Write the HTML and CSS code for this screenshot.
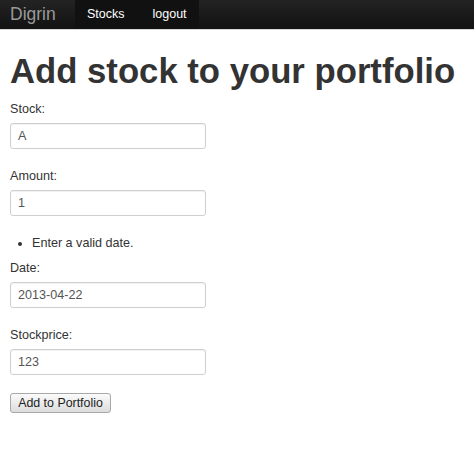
FILE: index.html
```html
<!DOCTYPE html>
<html>
<head>
<meta charset="utf-8">
<link rel="stylesheet" href="styles.css">
</head>
<body>
<div class="navbar">
  <a class="brand" href="#">Digrin</a>
  <ul class="nav">
    <li><a href="#">Stocks</a></li>
    <li class="logout"><a href="#">logout</a></li>
  </ul>
</div>
<div class="container">
  <h1>Add stock to your portfolio</h1>
  <form>
    <p class="field"><label>Stock:</label><input type="text" value="A"></p>
    <p class="field"><label>Amount:</label><input type="text" value="1"></p>
    <ul class="errorlist"><li>Enter a valid date.</li></ul>
    <p class="field"><label>Date:</label><input type="text" value="2013-04-22"></p>
    <p class="field"><label>Stockprice:</label><input type="text" value="123"></p>
    <button type="button" class="submit">Add to Portfolio</button>
  </form>
</div>
</body>
</html>
```
FILE: styles.css
```css
html, body {
  margin: 0;
  padding: 0;
  background: #fff;
}
body {
  font-family: "Liberation Sans", Arial, sans-serif;
  color: #333;
  font-size: 12.6px;
  line-height: 18px;
}
.navbar {
  height: 29px;
  display: flex;
  align-items: stretch;
  background: linear-gradient(#232323, #121212);
  border-bottom: 1px solid #d8d8d8;
}
.brand {
  display: flex;
  align-items: center;
  padding: 0 20px 2px 10px;
  width: 45px;
  font-size: 17.5px;
  color: #9a9a9a;
  text-decoration: none;
}
.nav {
  display: flex;
  list-style: none;
  margin: 0;
  padding: 0;
  background: #111;
}
.nav li {
  display: flex;
}
.nav a {
  display: flex;
  align-items: center;
  padding: 0 12px 2px 12px;
  color: #fff;
  font-size: 12.5px;
  text-decoration: none;
}
.nav .logout a {
  padding-left: 16px;
}
.container {
  padding: 0 10px;
}
h1 {
  margin: 21px 0 9px;
  font-size: 34.7px;
  line-height: 40px;
  font-weight: bold;
  color: #333;
  white-space: nowrap;
}
form {
  margin: 0;
}
.field {
  margin: 0 0 18px;
}
.field label {
  display: block;
  margin-bottom: 5px;
  line-height: 18px;
}
.field input {
  display: block;
  box-sizing: border-box;
  width: 196px;
  height: 26px;
  margin: 0;
  padding: 0 7px;
  border: 1px solid #cfcfcf;
  border-radius: 3px;
  box-shadow: inset 0 1px 1px rgba(0,0,0,0.06);
  font-family: "Liberation Sans", Arial, sans-serif;
  font-size: 12.6px;
  color: #555;
  background: #fff;
}
.errorlist {
  margin: 0 0 7px 0;
  padding-left: 22px;
}
.errorlist li {
  line-height: 18px;
}
.submit {
  display: block;
  margin-top: 0;
  box-sizing: border-box;
  width: 101px;
  height: 20px;
  padding: 0;
  border: 1px solid #a8a8a8;
  border-radius: 3px;
  background: linear-gradient(#fbfbfb, #dcdcdc);
  font-family: "Liberation Sans", Arial, sans-serif;
  font-size: 12.4px;
  color: #222;
}
```
